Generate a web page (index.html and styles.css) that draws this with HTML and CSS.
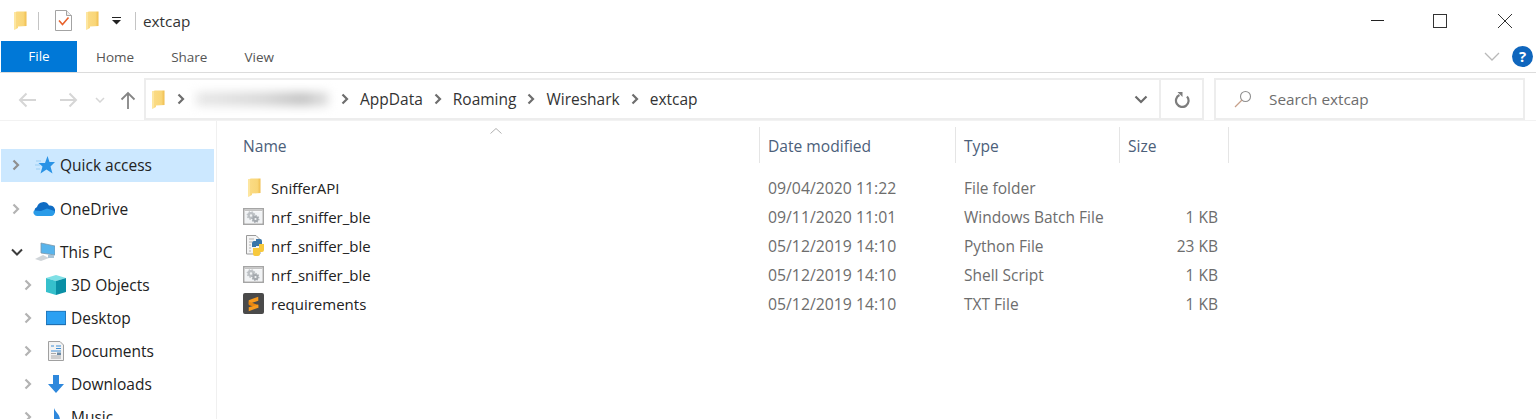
FILE: index.html
```html
<!DOCTYPE html>
<html lang="en">
<head>
  <meta charset="UTF-8" />
  <title>extcap</title>
  <link rel="stylesheet" href="styles.css">
</head>
<body>
  <svg class="defs" width="0" height="0">
    <defs>
      <linearGradient id="folderFill" x1="0" y1="0" x2="1" y2="0">
        <stop offset="0" stop-color="#fbdc87" />
        <stop offset=".75" stop-color="#f9d678" />
        <stop offset="1" stop-color="#efbd4e" />
      </linearGradient>
      <symbol id="folder" viewBox="0 0 14 19">
        <path d="M1 1.5 L4 0.5 H13.5 V15 L5 15.500 V17 L1.500 18.800 L1 18 Z" fill="url(#folderFill)" />
        <path d="M1 1.500 L3 1 V17.500 L1.500 18.800 L1 18 Z" fill="#fde6a0" />
      </symbol>
      <symbol id="chev" viewBox="0 0 10 12">
        <path d="M2.5 1.5 L7 6 L2.5 10.5" fill="none" stroke="currentColor" stroke-width="2.2" />
      </symbol>
      <symbol id="gearfile" viewBox="0 0 21 17">
        <rect x=".75" y=".75" width="19.5" height="15.5" fill="#fff" stroke="#a5a5a5" stroke-width="1.5" />
        <rect x="1.500" y="1.500" width="18" height="1.500" fill="#c4c4c4" />
        <rect x="2" y="3.500" width="17" height="11.500" fill="#f1f3f5" />
        <circle cx="8" cy="7.5" r="2.300" fill="none" stroke="#bcc0c4" stroke-width="2.200" />
        <circle cx="8" cy="7.5" r="3.800" fill="none" stroke="#bcc0c4" stroke-width="1.200" stroke-dasharray="1.500 1.500" />
        <circle cx="12.500" cy="11" r="2.100" fill="none" stroke="#a5aaaf" stroke-width="2" />
        <circle cx="12.500" cy="11" r="3.400" fill="none" stroke="#a5aaaf" stroke-width="1.100" stroke-dasharray="1.300 1.300" />
      </symbol>
    </defs>
  </svg>

  <div class="titlebar">
    <svg class="ico-folder"><use href="#folder" /></svg>
    <span class="qa-sep"></span>
    <svg class="ico-check" viewBox="0 0 17 21">
      <path d="M.5 .5 H11.5 L16.5 5.5 V20.5 H.5 Z" fill="#fff" stroke="#a3a3a3" />
      <path d="M11.5 .5 V5.5 H16.5" fill="#eee" stroke="#a3a3a3" />
      <path d="M4 10.5 L7.5 14.5 L13.5 7.5" fill="none" stroke="#e8622c" stroke-width="1.6" />
    </svg>
    <svg class="ico-folder"><use href="#folder" /></svg>
    <svg class="ico-drop" viewBox="0 0 9 8">
      <rect y="0" width="9" height="1" fill="#222" />
      <path d="M0 3 H9 L4.5 7.5 Z" fill="#222" />
    </svg>
    <span class="qa-sep qa-sep-last"></span>
    <span class="window-title">extcap</span>
    <div class="window-btns">
      <svg class="btn-min" width="13" height="14" viewBox="0 0 13 14"><path d="M0 6.5 H13" stroke="#222" /></svg>
      <svg width="14" height="14" viewBox="0 0 14 14"><rect x=".5" y=".5" width="13" height="13" fill="none" stroke="#333" /></svg>
      <svg width="14" height="14" viewBox="0 0 14 14"><path d="M0 0 L14 14 M14 0 L0 14" stroke="#333" /></svg>
    </div>
  </div>

  <div class="ribbon">
    <div class="tab tab-file">File</div>
    <div class="tab">Home</div>
    <div class="tab">Share</div>
    <div class="tab">View</div>
    <div class="ribbon-right">
      <svg width="16" height="9" viewBox="0 0 16 9"><path d="M1 1 L8 8 L15 1" fill="none" stroke="#b9b9b9" stroke-width="1.3" /></svg>
      <span class="help">?</span>
    </div>
  </div>

  <div class="navrow">
    <svg class="nav-arrow back" viewBox="0 0 18 16"><path d="M18 8 H2 M8.5 1.5 L2 8 L8.5 14.5" fill="none" stroke="#d6d6d6" stroke-width="2" /></svg>
    <svg class="nav-arrow forward" viewBox="0 0 18 16"><path d="M0 8 H16 M9.5 1.5 L16 8 L9.5 14.5" fill="none" stroke="#d6d6d6" stroke-width="2" /></svg>
    <svg class="nav-mini" viewBox="0 0 10 6"><path d="M1 1 L5 5 L9 1" fill="none" stroke="#d6d6d6" stroke-width="1.5" /></svg>
    <svg class="nav-up" viewBox="0 0 16 18"><path d="M8 18 V2 M1.5 8.5 L8 2 L14.5 8.5" fill="none" stroke="#858585" stroke-width="1.8" /></svg>

    <div class="address">
      <svg class="ico-folder addr-folder"><use href="#folder" /></svg>
      <svg class="crumb-chev first"><use href="#chev" /></svg>
      <span class="blurred"></span>
      <svg class="crumb-chev"><use href="#chev" /></svg>
      <span class="crumb">AppData</span>
      <svg class="crumb-chev"><use href="#chev" /></svg>
      <span class="crumb">Roaming</span>
      <svg class="crumb-chev"><use href="#chev" /></svg>
      <span class="crumb">Wireshark</span>
      <svg class="crumb-chev"><use href="#chev" /></svg>
      <span class="crumb">extcap</span>
      <svg class="addr-drop" viewBox="0 0 14 9"><path d="M1.5 1.5 L7 7 L12.5 1.5" fill="none" stroke="#6b6b6b" stroke-width="2.2" /></svg>
      <div class="refresh">
        <svg width="16" height="17" viewBox="0 0 16 17"><path d="M5.5 4 A6.3 6.3 0 1 0 13 5.5" fill="none" stroke="#7d7d7d" stroke-width="2.200" /><path d="M3.5 1 H8.5 V6 Z" fill="#7d7d7d" /></svg>
      </div>
    </div>

    <div class="search">
      <svg width="18" height="18" viewBox="0 0 18 18"><circle cx="11.5" cy="6.5" r="5" fill="none" stroke="#8f8f8f" stroke-width="1.1" /><path d="M8 10 L1 17" stroke="#c7a08a" stroke-width="1.3" /></svg>
      <span>Search extcap</span>
    </div>
  </div>

  <div class="main">
    <nav class="sidebar">
      <div class="tree-group">
        <div class="tree-row selected">
          <svg class="tw"><use href="#chev" /></svg>
          <svg class="tree-ico" viewBox="0 0 20 20"><path d="M12.5 1 L14.500 7 H20 L15.500 11.500 L17.500 18.500 L11.500 14.500 L5.500 18.500 L7.500 11.500 L3.500 8 H10 Z" fill="#2a93e6" /><path d="M1 6 H6 M0 10 H5 M1 14 H5" stroke="#9acdf2" /></svg>
          <span>Quick access</span>
        </div>
      </div>
      <div class="tree-group">
        <div class="tree-row">
          <svg class="tw faint"><use href="#chev" /></svg>
          <svg class="tree-ico cloud" viewBox="0 0 22 15"><path d="M5 14 A4.5 4.5 0 0 1 4 5.5 A6.5 6.5 0 0 1 16 4 A5 5 0 0 1 18 14 Z" fill="#0f6cc4" /><path d="M4 14.500 A3.600 3.600 0 0 1 1 9 L8 9.500 L14 7 L21.500 9.500 A3.800 3.800 0 0 1 18 14.500 Z" fill="#2a9be8" /></svg>
          <span>OneDrive</span>
        </div>
      </div>
      <div class="tree-group">
        <div class="tree-row">
          <svg class="tw open" viewBox="0 0 12 8"><path d="M1 1.5 L6 6.5 L11 1.5" fill="none" stroke="#3c3c3c" stroke-width="2" /></svg>
          <svg class="tree-ico" viewBox="0 0 20 20"><path d="M6 1 L20 4 V13 L6 11 Z" fill="#58b4ec" stroke="#7d98aa" stroke-width=".8" /><path d="M0 17 L8 13 L14 16 L6 19 Z" fill="#cfd4d8" /><path d="M13 13 H19 V16 H13 Z" fill="#a9c4d6" /></svg>
          <span>This PC</span>
        </div>
        <div class="tree-row child">
          <svg class="tw faint"><use href="#chev" /></svg>
          <svg class="tree-ico" viewBox="0 0 20 20"><path d="M10 0 L20 3 L10 6 L0 3 Z" fill="#7fe0e6" /><path d="M0 3 L10 6 V20 L0 17 Z" fill="#36c0cc" /><path d="M10 6 L20 3 V17 L10 20 Z" fill="#0a8fa5" /></svg>
          <span>3D Objects</span>
        </div>
        <div class="tree-row child">
          <svg class="tw faint"><use href="#chev" /></svg>
          <svg class="tree-ico" viewBox="0 0 21 15"><rect width="21" height="15" fill="#1f6fb0" /><rect x=".8" y=".8" width="19.4" height="13" fill="#2ba0f2" /></svg>
          <span>Desktop</span>
        </div>
        <div class="tree-row child">
          <svg class="tw faint"><use href="#chev" /></svg>
          <svg class="tree-ico" viewBox="0 0 20 20"><path d="M2.500 .5 H14 L17.500 4 V19.500 H2.500 Z" fill="#f3f3f3" stroke="#a0a0a0" /><path d="M5 5 H8 M10 5 H15 M10 7.500 H15 M5 10 H15" stroke="#3f8fd6" /><path d="M5 12.500 H10 M5 15 H15 M5 17 H15" stroke="#a8a8a8" /><rect x="11" y="11.500" width="4" height="2.500" fill="#6a8aa5" /></svg>
          <span>Documents</span>
        </div>
        <div class="tree-row child">
          <svg class="tw faint"><use href="#chev" /></svg>
          <svg class="tree-ico" viewBox="0 0 20 20"><path d="M7 1 H13 V10 H18 L10 19 L2 10 H7 Z" fill="#2e88dc" /></svg>
          <span>Downloads</span>
        </div>
        <div class="tree-row child">
          <svg class="tw faint"><use href="#chev" /></svg>
          <svg class="tree-ico" viewBox="0 0 20 20"><path d="M8 1 C9 5 14 7 14 13 C14 15 13 16 12 17 H5 A3 3 0 0 1 8 13 Z" fill="#2e88dc" /></svg>
          <span>Music</span>
        </div>
      </div>
    </nav>

    <section class="files">
      <svg class="sort-arrow" width="12" height="6" viewBox="0 0 12 6"><path d="M.5 5.500 L6 .5 L11.500 5.500" fill="none" stroke="#b0b0b0" /></svg>
      <div class="file-grid head">
        <div class="col-head col-name">Name</div>
        <div class="col-head">Date modified</div>
        <div class="col-head">Type</div>
        <div class="col-head">Size</div>
      </div>
      <div class="file-list">
        <div class="file-grid row">
          <div class="name"><svg class="file-ico folder-cell"><use href="#folder" /></svg>SnifferAPI</div>
          <div class="meta date">09/04/2020 11:22</div>
          <div class="meta">File folder</div>
          <div class="meta size"></div>
        </div>
        <div class="file-grid row">
          <div class="name"><svg class="file-ico gear-cell"><use href="#gearfile" /></svg>nrf_sniffer_ble</div>
          <div class="meta date">09/11/2020 11:01</div>
          <div class="meta">Windows Batch File</div>
          <div class="meta size">1 KB</div>
        </div>
        <div class="file-grid row">
          <div class="name">
            <svg class="file-ico gear-cell" viewBox="0 0 21 21">
              <path d="M3.500 .5 H13 L17 4.500 V19 H3.500 Z" fill="#f5f5f5" stroke="#9a9a9a" />
              <path d="M6 4 H11 M6 7 H9 M6 10 H8 M6 13 H8 M6 16 H8" stroke="#b5b5b5" />
              <path d="M13 4 H17 A2 2 0 0 1 19 6 V11 H13 V12 H9 V8 A2 2 0 0 1 11 6 H13 Z" fill="#3a76a8" />
              <path d="M21 9 V15 A2 2 0 0 1 19 17 H17 V19 A2 2 0 0 1 15 21 H12 A2 2 0 0 1 10 19 V13 H16 V9 Z" fill="#f7c93e" />
            </svg>nrf_sniffer_ble
          </div>
          <div class="meta date">05/12/2019 14:10</div>
          <div class="meta">Python File</div>
          <div class="meta size">23 KB</div>
        </div>
        <div class="file-grid row">
          <div class="name"><svg class="file-ico gear-cell"><use href="#gearfile" /></svg>nrf_sniffer_ble</div>
          <div class="meta date">05/12/2019 14:10</div>
          <div class="meta">Shell Script</div>
          <div class="meta size">1 KB</div>
        </div>
        <div class="file-grid row">
          <div class="name">
            <svg class="file-ico gear-cell" viewBox="0 0 22 22">
              <rect width="22" height="22" rx="2" fill="#4a4a4a" />
              <path d="M16 4 V8 L6 11.500 V7.500 Z" fill="#f79a1e" />
              <path d="M6 9 L16 12.500 V16 L6 12.500 Z" fill="#e8860f" />
              <path d="M16 12 V15.500 L6 19 V15 Z" fill="#f79a1e" />
            </svg>requirements
          </div>
          <div class="meta date">05/12/2019 14:10</div>
          <div class="meta">TXT File</div>
          <div class="meta size">1 KB</div>
        </div>
      </div>
    </section>
  </div>
</body>
</html>
```

FILE: styles.css
```css
html, body {
  margin: 0;
  padding: 0;
  height: 419px;
  overflow: hidden;
  background-color: #fff;
  font-family: 'Open Sans', 'Noto Sans', sans-serif;
  font-size: 15px;
  color: #222;
}
.defs {
  position: absolute;
}
.titlebar {
  height: 41px;
  display: flex;
  align-items: center;
  padding-left: 13px;
}
.ico-folder {
  width: 14px;
  height: 19px;
  flex: none;
}
.qa-sep {
  width: 1px;
  height: 18px;
  background-color: #c4c4c4;
  margin: 0 16px 0 11px;
}
.ico-check {
  width: 17px;
  height: 21px;
  margin-right: 13px;
}
.ico-drop {
  width: 9px;
  height: 8px;
  margin-left: 13px;
}
.qa-sep-last {
  margin: 0 7px 0 14px;
}
.window-title {
  font-size: 15.3px;
  color: #333;
}
.window-btns {
  margin-left: auto;
  display: flex;
  gap: 51px;
  padding-right: 24px;
  align-items: center;
}
.btn-min {
  margin-right: -2px;
}
.ribbon {
  height: 31px;
  display: flex;
  align-items: center;
  border-bottom: 1px solid #dcdcdc;
  padding-left: 1px;
  gap: 37px;
}
.tab {
  font-size: 13.5px;
  color: #555;
}
.tab-file {
  width: 76px;
  height: 31px;
  line-height: 31px;
  text-align: center;
  background-color: #0078d7;
  color: #fff;
  margin-right: -18px;
}
.ribbon-right {
  margin-left: auto;
  display: flex;
  align-items: center;
  gap: 12px;
  padding-right: 3px;
}
.help {
  width: 21px;
  height: 21px;
  border-radius: 50%;
  background-color: #0f66bd;
  color: #fff;
  font-weight: 700;
  font-size: 15px;
  line-height: 21px;
  text-align: center;
}
.navrow {
  padding-top: 5px;
  box-sizing: border-box;
  display: flex;
  align-items: flex-start;
  border-bottom: 1px solid #f2f2f2;
  height: 48px;
}
.nav-arrow {
  width: 18px;
  height: 16px;
  margin-top: 14px;
}
.back {
  margin-left: 18px;
}
.forward {
  margin-left: 24px;
}
.nav-mini {
  width: 10px;
  height: 6px;
  margin: 19px 0 0 17px;
}
.nav-up {
  width: 16px;
  height: 18px;
  margin: 13px 0 0 15px;
}
.address {
  margin-left: 8px;
  width: 1060px;
  height: 42px;
  box-sizing: border-box;
  border: 2px solid #ededed;
  display: flex;
  align-items: center;
  padding-left: 5px;
  font-size: 15.5px;
  color: #333;
}
.addr-folder {
  margin-right: 11px;
}
.crumb-chev {
  width: 10px;
  height: 12px;
  color: #6e6e6e;
  margin: 0 5px;
  flex: none;
}
.crumb-chev.first {
  margin: 0 8px 0 0;
}
.blurred {
  width: 133px;
  height: 14px;
  margin: 0 6px 0 2px;
  background: linear-gradient(to right, #e8e8e8, #d8d8d8 50%, #c4c4c4 80%, #e2e2e2);
  filter: blur(5px);
}
.crumb {
  margin: 0 5px;
}
.addr-drop {
  width: 14px;
  height: 9px;
  margin-left: auto;
  margin-right: 11px;
}
.refresh {
  width: 41px;
  height: 38px;
  border-left: 2px solid #ededed;
  display: flex;
  align-items: center;
  justify-content: center;
}
.search {
  margin-left: 10px;
  width: 311px;
  height: 42px;
  box-sizing: border-box;
  border: 2px solid #ededed;
  display: flex;
  align-items: center;
  gap: 17px;
  padding-left: 18px;
  color: #6d6d6d;
  font-size: 15.3px;
}
.main {
  display: flex;
  height: 298px;
}
.sidebar {
  width: 217px;
  box-sizing: border-box;
  flex: none;
  border-right: 1px solid #f0f0f0;
  padding-top: 28px;
  display: flex;
  flex-direction: column;
  gap: 10px;
}
.tree-row {
  height: 33px;
  box-sizing: border-box;
  display: flex;
  align-items: center;
  font-size: 15.5px;
  color: #222;
  padding-left: 10px;
  margin-left: 1px;
  margin-right: 2px;
}
.tree-row.selected {
  background-color: #cce8ff;
  padding-bottom: 2px;
}
.tw {
  width: 10px;
  height: 12px;
  color: #8f8f8f;
  flex: none;
}
.tw.faint {
  color: #b3b3b3;
}
.tw.open {
  width: 12px;
  height: 8px;
  margin-right: -2px;
}
.tree-ico {
  width: 20px;
  height: 20px;
  margin: 0 5px 0 14px;
  flex: none;
}
.tree-ico.cloud {
  width: 22px;
  margin-left: 12px;
}
.child {
  padding-left: 22px;
}
.child .tree-ico {
  margin: 0 5px 0 13px;
  width: 20px;
}
.files {
  flex: 1;
  position: relative;
}
.sort-arrow {
  position: absolute;
  left: 273px;
  top: 7px;
}
.file-grid {
  display: grid;
  grid-template-columns: 543px 196px 164px 109px;
}
.head {
  padding-top: 6px;
  height: 36px;
}
.col-head {
  font-size: 15.6px;
  line-height: 39px;
  height: 36px;
  color: #4c607a;
  padding-left: 8px;
  border-right: 1px solid #e5e5e5;
}
.col-name {
  padding-left: 26px;
}
.file-list {
  padding-top: 10px;
}
.row {
  height: 29px;
  align-items: center;
}
.name {
  display: flex;
  align-items: center;
  padding-left: 26px;
  color: #222;
  font-size: 15px;
}
.file-ico {
  flex: none;
  margin-right: 7px;
}
.folder-cell {
  width: 14px;
  height: 19px;
  margin-left: 4px;
  margin-right: 10px;
}
.gear-cell {
  width: 21px;
  height: 21px;
}
.meta {
  padding-left: 8px;
  padding-top: 1px;
  font-size: 15.5px;
  color: #6d6d6d;
}
.date {
  font-size: 15.8px;
}
.size {
  text-align: right;
  padding-right: 11px;
}
```
